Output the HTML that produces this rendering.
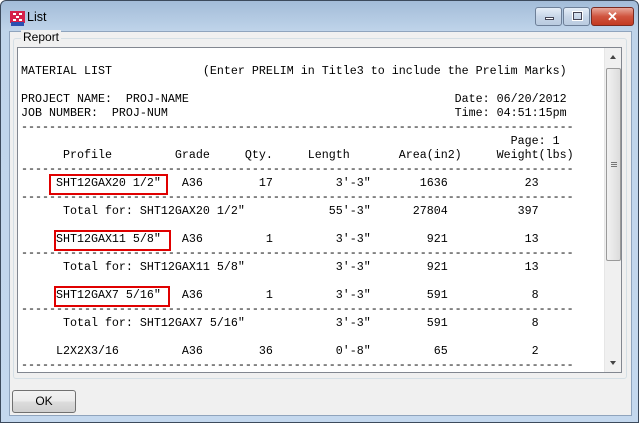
<!DOCTYPE html>
<html><head><style>
*{margin:0;padding:0;box-sizing:border-box}
body{width:639px;height:423px;overflow:hidden;background:#fff;font-family:"Liberation Sans",sans-serif}
.win{position:absolute;left:0;top:0;width:639px;height:423px;border:1px solid #3c4a5c;border-radius:6px 6px 0 0;background:linear-gradient(#a3bcd8,#bfd4ea 30px,#c4d8ee)}
.client{position:absolute;left:8px;top:30px;width:623px;height:385px;background:#f0f0f0;border:1px solid #8fa4bd}
.title{position:absolute;left:26px;top:9px;font-size:12.5px;color:#000}
.btn{position:absolute;top:6px;height:19px;border:1px solid #6d7f98;border-radius:3px;background:linear-gradient(#e6eef8,#c8d6e8 50%,#b9cbe0)}
.gb{position:absolute;left:12px;top:37px;width:614px;height:341px;border:1px solid #d5dfe5;border-radius:3px}
.gbl{position:absolute;left:20px;top:29px;background:#f0f0f0;padding:0 2px;font-size:12px}
.tb{position:absolute;left:16px;top:46px;width:605px;height:326px;background:#fff;border:1px solid #828790;overflow:hidden}
pre{position:absolute;left:3px;top:16px;font-family:"Liberation Mono",monospace;font-size:11.67px;line-height:14px;color:#000}
.sb{position:absolute;left:586px;top:0;width:17px;height:324px;background:#f0f0f0;border-left:1px solid #e6e6e6}
.thumb{position:absolute;left:1px;top:20px;width:15px;height:193px;border:1px solid #9a9a9a;border-radius:2px;background:linear-gradient(90deg,#f2f2f2,#dcdcdc)}
.red{position:absolute;border:2px solid #e00000}
.ok{position:absolute;left:11px;top:389px;width:64px;height:23px;border:1px solid #707070;border-radius:3px;background:linear-gradient(#f2f2f2,#ebebeb 50%,#dddddd 51%,#cfcfcf);font-size:12px;text-align:center;line-height:21px}
</style></head><body>
<div class="win">
<svg style="position:absolute;left:8px;top:9px" width="17" height="17"><rect x="1" y="1" width="15" height="12" fill="#d4204a"/><rect x="2" y="12" width="13" height="4" fill="#2a4fb0"/><g fill="#fff"><rect x="4" y="3" width="3" height="2"/><rect x="10" y="3" width="3" height="2"/><rect x="7" y="6" width="3" height="2"/><rect x="4" y="9" width="3" height="2"/><rect x="10" y="9" width="3" height="2"/></g></svg>
<div class="title">List</div>
<div class="btn" style="left:534px;width:27px"><div style="position:absolute;left:9px;top:9px;width:9px;height:3px;background:#fff;border:1px solid #445"></div></div>
<div class="btn" style="left:562px;width:27px"><div style="position:absolute;left:9px;top:4px;width:9px;height:8px;border:1px solid #445;outline:1px solid #fff"></div></div>
<div class="btn" style="left:590px;width:43px;border-color:#7a2a20;background:linear-gradient(#e8a89a,#d0543e 50%,#c33a22)"><div style="position:absolute;left:0;width:41px;top:0;text-align:center;color:#fff;font-weight:bold;font-size:13px;line-height:17px">✕</div></div>
<div class="client"></div>
<div class="gb"></div>
<div class="gbl">Report</div>
<div class="tb">
<pre>MATERIAL LIST             (Enter PRELIM in Title3 to include the Prelim Marks)

PROJECT NAME:  PROJ-NAME                                      Date: 06/20/2012
JOB NUMBER:  PROJ-NUM                                         Time: 04:51:15pm
-------------------------------------------------------------------------------
                                                                      Page: 1
      Profile         Grade     Qty.     Length       Area(in2)     Weight(lbs)
-------------------------------------------------------------------------------
     SHT12GAX20 1/2"   A36        17         3'-3"       1636           23
-------------------------------------------------------------------------------
      Total for: SHT12GAX20 1/2"            55'-3"      27804          397

     SHT12GAX11 5/8"   A36         1         3'-3"        921           13
-------------------------------------------------------------------------------
      Total for: SHT12GAX11 5/8"             3'-3"        921           13

     SHT12GAX7 5/16"   A36         1         3'-3"        591            8
-------------------------------------------------------------------------------
      Total for: SHT12GAX7 5/16"             3'-3"        591            8

     L2X2X3/16         A36        36         0'-8"         65            2
-------------------------------------------------------------------------------</pre>
<div class="red" style="left:31px;top:126px;width:119px;height:21px"></div>
<div class="red" style="left:36px;top:182px;width:117px;height:21px"></div>
<div class="red" style="left:36px;top:238px;width:116px;height:21px"></div>
<div class="sb">
<div style="position:absolute;left:5px;top:7px;width:0;height:0;border:3px solid transparent;border-bottom:4px solid #444;border-top:0"></div>
<div class="thumb"><div style="position:absolute;left:4px;top:93px;width:6px;height:5px;border-top:1px solid #777;border-bottom:1px solid #777"><div style="margin-top:1px;border-top:1px solid #777"></div></div></div>
<div style="position:absolute;left:5px;top:313px;width:0;height:0;border:3px solid transparent;border-top:4px solid #444;border-bottom:0"></div>
</div>
</div>
<div class="ok">OK</div>
</div>
</body></html>
